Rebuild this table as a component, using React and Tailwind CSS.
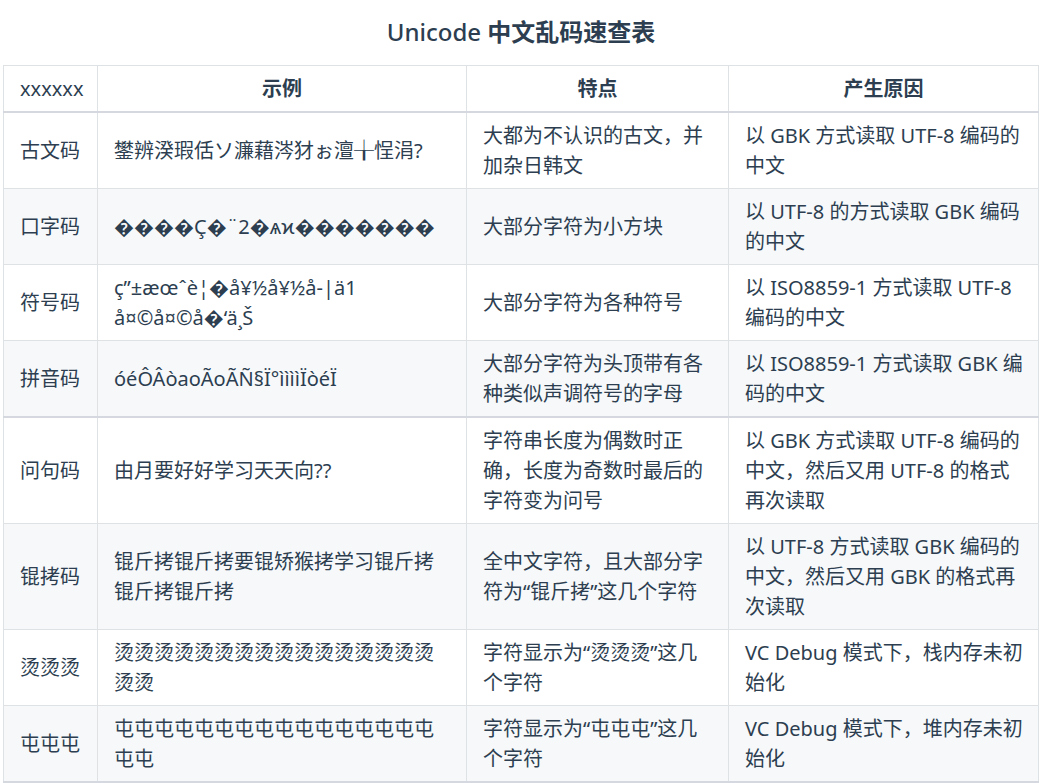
const rows = [
  {
    name: '古文码',
    sample: '鐢辨湀瑕佸ソ濂藉涔犲ぉ澶╁悜涓?',
    feature: '大都为不认识的古文，并加杂日韩文',
    cause: '以 GBK 方式读取 UTF-8 编码的中文',
  },
  {
    name: '口字码',
    sample: '\uFFFD\uFFFD\uFFFD\uFFFDÇ\uFFFD¨2\uFFFDѧϰ\uFFFD\uFFFD\uFFFD\uFFFD\uFFFD\uFFFD\uFFFD',
    feature: '大部分字符为小方块',
    cause: '以 UTF-8 的方式读取 GBK 编码的中文',
  },
  {
    name: '符号码',
    sample: 'ç”±æœˆè¦\uFFFDå¥½å¥½å-|ä1 å¤©å¤©å\uFFFD‘ä¸Š',
    feature: '大部分字符为各种符号',
    cause: '以 ISO8859-1 方式读取 UTF-8 编码的中文',
  },
  {
    name: '拼音码',
    sample: 'óéÔÂòaoÃoÃÑ§Ï°ììììÏòéÏ',
    feature: '大部分字符为头顶带有各种类似声调符号的字母',
    cause: '以 ISO8859-1 方式读取 GBK 编码的中文',
    split: true,
  },
  {
    name: '问句码',
    sample: '由月要好好学习天天向??',
    feature: '字符串长度为偶数时正确，长度为奇数时最后的字符变为问号',
    cause: '以 GBK 方式读取 UTF-8 编码的中文，然后又用 UTF-8 的格式再次读取',
  },
  {
    name: '锟拷码',
    sample: '锟斤拷锟斤拷要锟矫猴拷学习锟斤拷锟斤拷锟斤拷',
    feature: '全中文字符，且大部分字符为“锟斤拷”这几个字符',
    cause: '以 UTF-8 方式读取 GBK 编码的中文，然后又用 GBK 的格式再次读取',
  },
  {
    name: '烫烫烫',
    sample: '烫烫烫烫烫烫烫烫烫烫烫烫烫烫烫烫烫烫',
    feature: '字符显示为“烫烫烫”这几个字符',
    cause: 'VC Debug 模式下，栈内存未初始化',
  },
  {
    name: '屯屯屯',
    sample: '屯屯屯屯屯屯屯屯屯屯屯屯屯屯屯屯屯屯',
    feature: '字符显示为“屯屯屯”这几个字符',
    cause: 'VC Debug 模式下，堆内存未初始化',
  },
]

export default function App() {
  return (
    <div
      className="min-h-screen bg-white px-[3px] text-[#2c3e50]"
      style={{ fontFamily: '"Noto Sans", "Noto Sans CJK SC", sans-serif' }}
    >
      <h1 className="flex h-[65px] items-center justify-center pb-px text-[24px] leading-none">
        <span className="font-medium">Unicode&nbsp;</span>
        <span className="font-bold">中文乱码速查表</span>
      </h1>

      <table className="w-full table-fixed border-collapse text-[20px] leading-[30px]">
        <colgroup>
          <col className="w-[94px]" />
          <col className="w-[369px]" />
          <col className="w-[262px]" />
          <col />
        </colgroup>
        <thead>
          <tr className="border-b-2 border-[#d5d9df]">
            <th className="border border-[#dfe2e5] px-4 py-[7.5px] text-left font-normal">xxxxxx</th>
            <th className="border border-[#dfe2e5] px-4 py-[7.5px] text-center font-bold">示例</th>
            <th className="border border-[#dfe2e5] px-4 py-[7.5px] text-center font-bold">特点</th>
            <th className="border border-[#dfe2e5] px-4 py-[7.5px] text-center font-bold">产生原因</th>
          </tr>
        </thead>
        <tbody>
          {rows.map((r, i) => (
            <tr
              key={r.name}
              className={
                (i % 2 === 1 ? 'bg-[#f6f8fa] ' : 'bg-white ') +
                (r.split || i === rows.length - 1 ? 'border-b-2 border-[#d5d9df]' : '')
              }
            >
              <td className="border border-[#dfe2e5] px-4 py-[7.5px] align-middle">{r.name}</td>
              <td className="border border-[#dfe2e5] px-4 py-[7.5px] align-middle">{r.sample}</td>
              <td className="border border-[#dfe2e5] px-4 py-[7.5px] align-middle">{r.feature}</td>
              <td className="border border-[#dfe2e5] py-[7.5px] pl-4 pr-3 align-middle">{r.cause}</td>
            </tr>
          ))}
        </tbody>
      </table>
    </div>
  )
}
